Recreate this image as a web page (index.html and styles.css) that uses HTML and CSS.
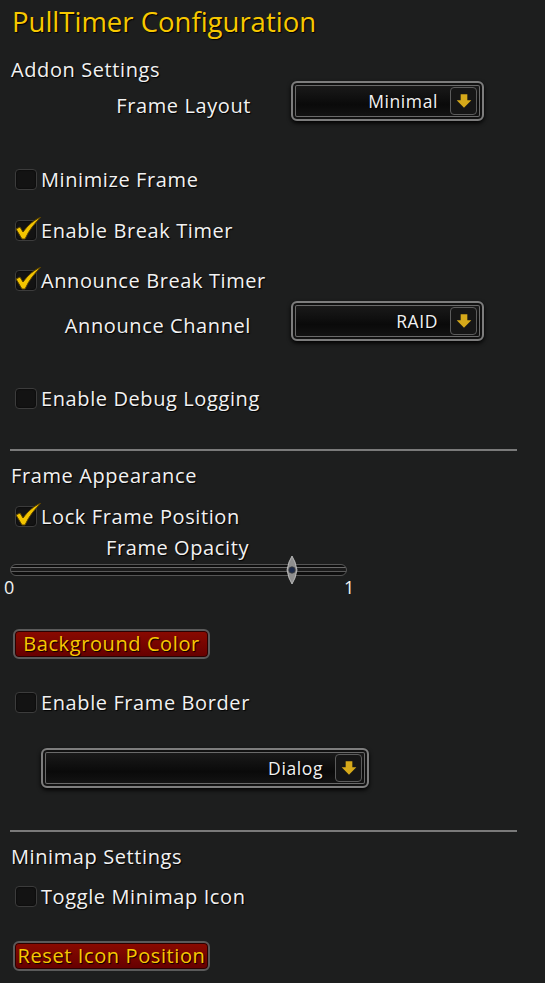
FILE: index.html
```html
<!DOCTYPE html>
<html lang="en">
  <head>
    <meta charset="UTF-8" />
    <meta name="viewport" content="width=device-width, initial-scale=1.0" />
    <title>PullTimer Configuration</title>
    <link rel="stylesheet" href="styles.css">
  </head>
  <body>
    <h1 class="title">PullTimer Configuration</h1>

    <section class="group">
      <h2 class="group-title">Addon Settings</h2>
      <div class="select-row row-layout">
        <span class="select-label">Frame Layout</span>
        <div class="dropdown dd-small">
          <span class="dd-text">Minimal</span>
          <span class="dd-btn"><svg viewBox="0 0 12 12" width="16" height="16"><path d="M3.5 1h5v4.5h3L6 11 0.5 5.5h3z" fill="#d6a91a"/></svg></span>
        </div>
      </div>
      <label class="check row-minimize"><span class="box"></span>Minimize Frame</label>
      <label class="check checked row-break"><span class="box"><svg class="tick" viewBox="0 0 27 24"><path d="M1 12L5 10L8 15C13 8 19 3 26 0C20 6 14 13 10 22H7Z" fill="#f2c400" stroke="#5a4300" stroke-width="1"/></svg></span>Enable Break Timer</label>
      <label class="check checked row-announce"><span class="box"><svg class="tick" viewBox="0 0 27 24"><path d="M1 12L5 10L8 15C13 8 19 3 26 0C20 6 14 13 10 22H7Z" fill="#f2c400" stroke="#5a4300" stroke-width="1"/></svg></span>Announce Break Timer</label>
      <div class="select-row row-channel">
        <span class="select-label">Announce Channel</span>
        <div class="dropdown dd-small">
          <span class="dd-text">RAID</span>
          <span class="dd-btn"><svg viewBox="0 0 12 12" width="16" height="16"><path d="M3.5 1h5v4.5h3L6 11 0.5 5.5h3z" fill="#d6a91a"/></svg></span>
        </div>
      </div>
      <label class="check row-debug"><span class="box"></span>Enable Debug Logging</label>
    </section>

    <hr class="sep sep-one">

    <section class="group">
      <h2 class="group-title">Frame Appearance</h2>
      <label class="check checked row-lock"><span class="box"><svg class="tick" viewBox="0 0 27 24"><path d="M1 12L5 10L8 15C13 8 19 3 26 0C20 6 14 13 10 22H7Z" fill="#f2c400" stroke="#5a4300" stroke-width="1"/></svg></span>Lock Frame Position</label>
      <div class="slider">
        <div class="slider-title">Frame Opacity</div>
        <div class="track">
          <svg class="thumb" viewBox="0 0 12 28" width="12" height="28">
            <path d="M6 0L9 6L11 14L9 22L6 28L3 22L1 14L3 6Z" fill="#8e8e8e" stroke="#cfcfcf" stroke-width="0.8"/>
            <circle cx="6" cy="14" r="3.2" fill="#1c2a4a" stroke="#3b3b3b" stroke-width="0.8"/>
          </svg>
        </div>
        <div class="slider-ends"><span>0</span><span>1</span></div>
      </div>
      <button class="red-btn row-bg">Background Color</button>
      <label class="check row-border"><span class="box"></span>Enable Frame Border</label>
      <div class="dropdown dd-wide">
        <span class="dd-text">Dialog</span>
        <span class="dd-btn"><svg viewBox="0 0 12 12" width="16" height="16"><path d="M3.5 1h5v4.5h3L6 11 0.5 5.5h3z" fill="#d6a91a"/></svg></span>
      </div>
    </section>

    <hr class="sep sep-two">

    <section class="group">
      <h2 class="group-title">Minimap Settings</h2>
      <label class="check row-minimap"><span class="box"></span>Toggle Minimap Icon</label>
      <button class="red-btn row-reset">Reset Icon Position</button>
    </section>
  </body>
</html>
```

FILE: styles.css
```css
body {
  margin: 0;
  background-color: #1d1e1e;
  color: #f2f2f2;
  font-family: "Open Sans", "DejaVu Sans", sans-serif;
  font-size: 20px;
  letter-spacing: 0.6px;
  width: 545px;
  height: 983px;
  overflow: hidden;
}
.title {
  margin: 0;
  padding: 3px 0 0 12px;
  height: 57px;
  box-sizing: border-box;
  font-size: 27.5px;
  font-weight: normal;
  letter-spacing: 0;
  line-height: 38px;
  color: #f8c800;
  text-shadow: 1px 1px 1px #000;
}
.group-title {
  margin: 0;
  padding-left: 11px;
  font-size: 20px;
  font-weight: normal;
  line-height: 26px;
  text-shadow: 1px 1px 1px #000;
}
.check {
  display: flex;
  align-items: center;
  height: 26px;
  padding-left: 15px;
  text-shadow: 1px 1px 1px #000;
}
.box {
  position: relative;
  width: 22px;
  height: 21px;
  margin-right: 4px;
  box-sizing: border-box;
  border: 1px solid #3c3c3c;
  border-radius: 4px;
  background-color: #131313;
  box-shadow: inset 0 0 2px #000;
}
.tick {
  position: absolute;
  left: -1px;
  top: -4px;
  width: 27px;
  height: 24px;
}
.select-row {
  display: flex;
  align-items: center;
}
.select-label {
  width: 251px;
  text-align: right;
  margin-right: 40px;
  padding-top: 8px;
  text-shadow: 1px 1px 1px #000;
}
.dropdown {
  display: flex;
  align-items: center;
  justify-content: flex-end;
  height: 40px;
  box-sizing: border-box;
  border: 2px solid #7d7d7d;
  border-radius: 6px;
  background: linear-gradient(180deg, #1c1c1c, #0a0a0a 60%, #151515);
  box-shadow: inset 0 0 0 2px #111, inset 0 0 0 3px #6a6a6a, 0 2px 4px #000;
  padding-right: 5px;
}
.dd-small {
  width: 193px;
}
.dd-wide {
  width: 328px;
  margin-left: 41px;
}
.dd-text {
  margin-right: 12px;
  font-size: 17.5px;
  text-shadow: 1px 1px 1px #000;
}
.dd-btn {
  display: flex;
  align-items: center;
  justify-content: center;
  width: 27px;
  height: 28px;
  box-sizing: border-box;
  border: 1px solid #5c5c5c;
  border-radius: 4px;
  background-color: #161616;
}
.row-layout {
  margin-top: -2px;
}
.row-minimize {
  margin-top: 45px;
}
.row-break {
  margin-top: 25px;
}
.row-announce {
  margin-top: 24px;
}
.row-channel {
  margin-top: 8px;
}
.row-debug {
  margin-top: 44px;
}
.sep {
  margin: 0 0 0 10px;
  width: 507px;
  border: 0;
  border-top: 2px solid #7a7a7a;
}
.sep-one {
  margin-top: 38px;
}
.sep-one + .group {
  margin-top: 12px;
}
.row-lock {
  margin-top: 14px;
}
.slider {
  width: 355px;
  margin-top: 7px;
}
.slider-title {
  text-align: center;
  line-height: 24px;
  text-shadow: 1px 1px 1px #000;
}
.track {
  position: relative;
  height: 12px;
  margin: 4px 0 0 10px;
  width: 337px;
  box-sizing: border-box;
  border: 1px solid #555;
  border-radius: 6px;
  background: linear-gradient(180deg, #0e0e0e 0 2px, #6a6a6a 2px 3px, #1a1a1a 3px 6px, #5a5a5a 6px 7px, #0e0e0e 7px);
}
.thumb {
  position: absolute;
  left: 275px;
  top: -9px;
}
.slider-ends {
  display: flex;
  justify-content: space-between;
  padding-left: 4px;
  line-height: 22px;
  font-size: 18px;
  margin-top: 0;
}
.red-btn {
  display: block;
  width: 197px;
  height: 30px;
  margin-left: 13px;
  padding: 0;
  box-sizing: border-box;
  border: 2px solid #5a5a5a;
  border-radius: 6px;
  background: linear-gradient(180deg, #8a0a00, #650000);
  box-shadow: inset 0 0 0 1px #2b0000;
  color: #f8c800;
  font-family: "Open Sans", "DejaVu Sans", sans-serif;
  font-size: 20px;
  letter-spacing: 0.6px;
  line-height: 24px;
  text-shadow: 1px 1px 1px #000;
}
.row-bg {
  margin-top: 31px;
}
.row-border {
  margin-top: 30px;
}
.dd-wide {
  margin-top: 33px;
}
.sep-two {
  margin-top: 42px;
}
.sep-two + .group {
  margin-top: 12px;
}
.row-minimap {
  margin-top: 13px;
}
.row-reset {
  margin-top: 32px;
}
```
